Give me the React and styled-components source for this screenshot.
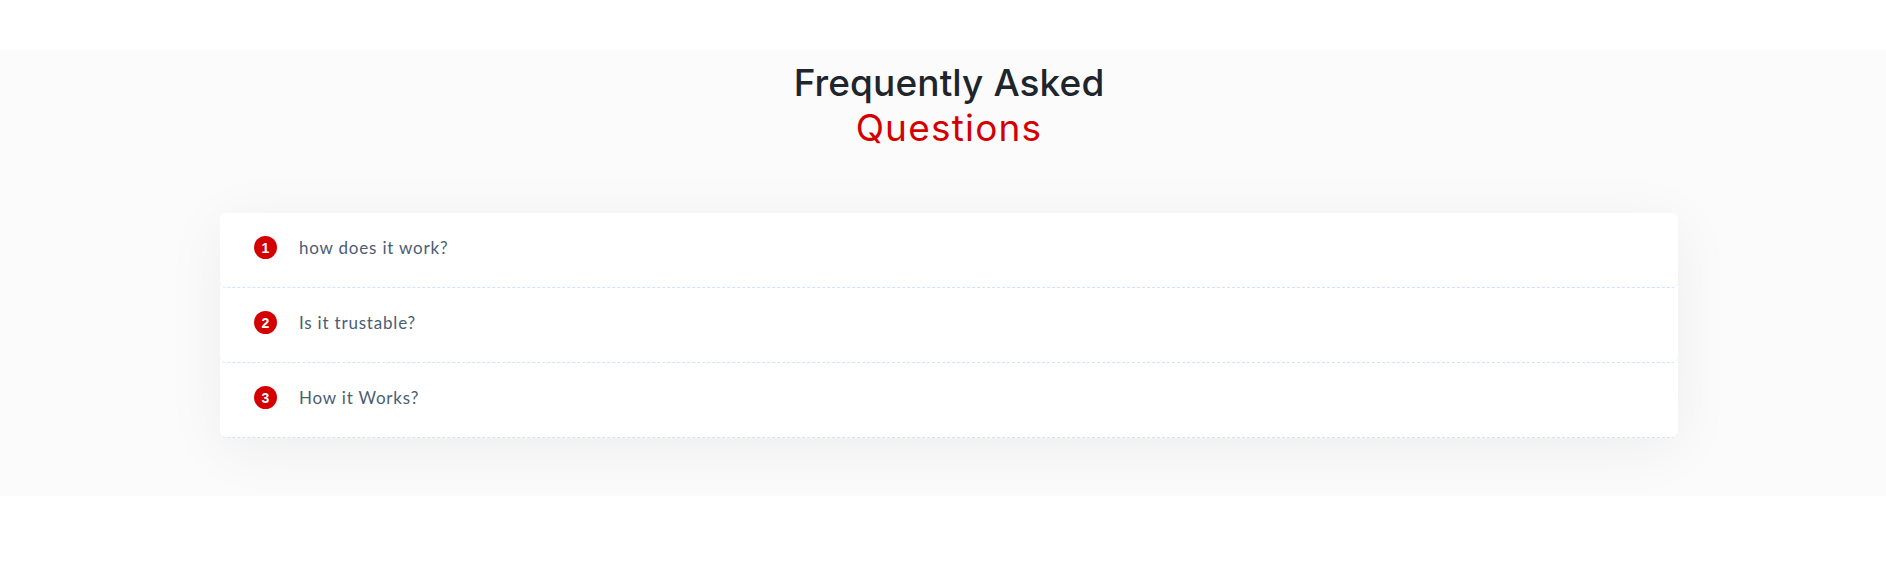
import React from 'react';
import styled, { createGlobalStyle } from 'styled-components';

const GlobalStyle = createGlobalStyle`
  body {
    margin: 0;
    background: #ffffff;
    font-family: 'Lato', 'Liberation Sans', sans-serif;
  }
`;

const Page = styled.div`
  padding-top: 50px;
  height: 563px;
  box-sizing: border-box;
`;

const Section = styled.section`
  background: #fbfbfb;
  height: 446px;
  box-sizing: border-box;
  padding: 10px 0 0 12px;
  display: flex;
  flex-direction: column;
  align-items: center;
`;

const Heading = styled.h2`
  margin: 0;
  font-family: 'Inter', 'Noto Sans', sans-serif;
  font-weight: 500;
  font-size: 37px;
  line-height: 45px;
  color: #1f252c;
  text-align: center;
  letter-spacing: 0.1px;
`;

const Accent = styled.span`
  display: block;
  color: #d40000;
  font-weight: 400;
  letter-spacing: 1.2px;
`;

const Card = styled.div`
  width: 1458px;
  margin-top: 63px;
  background: #ffffff;
  border-radius: 6px;
  box-shadow: 0 10px 60px rgba(0, 0, 0, 0.06);
`;

const Row = styled.div`
  height: 75px;
  box-sizing: border-box;
  display: flex;
  align-items: flex-start;
  gap: 22px;
  padding: 23px 34px 0;
  border-bottom: 1px dashed #cfe3fa;
  border-radius: 6px;
`;

const Badge = styled.span`
  width: 23px;
  height: 23px;
  flex: none;
  border-radius: 50%;
  background: #d40000;
  color: #ffffff;
  font-family: 'Liberation Sans', Arial, sans-serif;
  font-weight: 700;
  font-size: 14px;
  display: flex;
  align-items: center;
  justify-content: center;
`;

const Question = styled.span`
  font-size: 17px;
  line-height: 23px;
  color: #4a5d74;
  letter-spacing: 0.8px;
`;

const questions = ['how does it work?', 'Is it trustable?', 'How it Works?'];

export default function App() {
  return (
    <>
      <GlobalStyle />
      <Page>
        <Section>
          <Heading>
            Frequently Asked
            <Accent>Questions</Accent>
          </Heading>
          <Card>
            {questions.map((q, i) => (
              <Row key={q}>
                <Badge>{i + 1}</Badge>
                <Question>{q}</Question>
              </Row>
            ))}
          </Card>
        </Section>
      </Page>
    </>
  );
}
